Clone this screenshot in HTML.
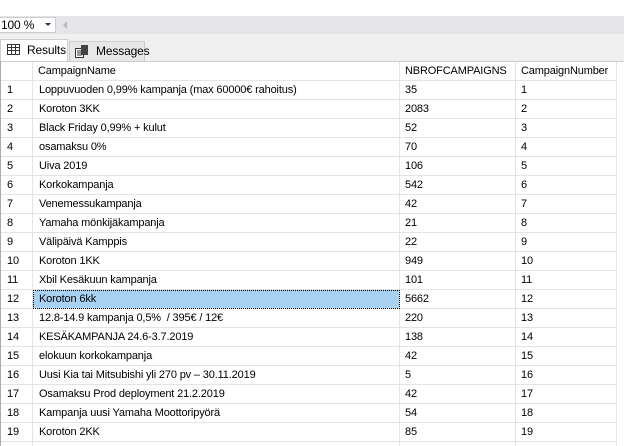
<!DOCTYPE html>
<html><head><meta charset="utf-8"><style>
*{margin:0;padding:0;box-sizing:border-box}
html,body{width:624px;height:446px;overflow:hidden}
body{background:#fff;font-family:"Liberation Sans",sans-serif;font-size:11px;letter-spacing:-0.15px;color:#000;position:relative}
.bar{position:absolute;left:0;top:16px;width:624px;height:18px;background:#e6e6ea}
.dd{position:absolute;left:0;top:17px;width:56px;height:16px;background:#fff;border:1px solid #ccc;border-left:none;font-size:12px;line-height:14px;padding-left:1px}
.dd span{position:absolute;right:4px;top:5px;width:0;height:0;border-left:3px solid transparent;border-right:3px solid transparent;border-top:3px solid #333}
.tabs{position:absolute;left:0;top:34px;width:624px;height:27px;background:#f0f0f0}
.tab{position:absolute;height:22px;line-height:20px;font-size:12px}
.grid{position:absolute;left:0;top:61px;width:624px;height:385px;border-top:1px solid #ccc;border-left:1px solid #aaa;overflow:hidden}
.row{position:absolute;left:0;height:19px;width:616px}
.c{position:absolute;top:0;height:19px;line-height:18px;border-right:1px solid #e4e4e4;border-bottom:1px solid #e4e4e4;white-space:nowrap;overflow:hidden}
.c0{left:0;width:32px;padding-left:6px}
.c1{left:32px;width:367px;padding-left:6px}
.c2{left:399px;width:116px;padding-left:5px}
.c3{left:515px;width:101px;padding-left:5px}
.hdr .c{padding-left:5px}
.sel{background:#a9d1f2;outline:1px dotted #000;outline-offset:-1px}
</style></head><body>
<div class="bar"></div>
<div class="dd">100 %<span></span></div>
<div style="position:absolute;left:63px;top:21px;width:0;height:0;border-top:4px solid transparent;border-bottom:4px solid transparent;border-right:4px solid #bbb"></div>
<div class="tabs">
<div class="tab" style="left:0;top:5px;width:68px;background:#fff;border:1px solid #ccc;border-bottom:none;padding-left:26px">Results
<svg style="position:absolute;left:6px;top:4px" width="13" height="11"><rect x="0.5" y="0.5" width="12" height="10" fill="#fff" stroke="#333"/><path d="M0 3.5H13M0 6.5H13M4.5 0V11M8.5 0V11" stroke="#333"/></svg></div>
<div class="tab" style="left:69px;top:7px;width:76px;height:20px;background:#e8e8e8;border:1px solid #ccc;border-bottom:none;padding-left:26px;line-height:18px">Messages
<svg style="position:absolute;left:5px;top:3px" width="14" height="13"><rect x="0.5" y="3.5" width="8" height="9" fill="#fff" stroke="#333"/><path d="M2 6H7M2 8H7M2 10H7" stroke="#333"/><rect x="6" y="0" width="7" height="10" fill="#444"/></svg></div>
</div>
<div class="grid">
<div class="row hdr" style="top:0"><div class="c c0"></div><div class="c c1">CampaignName</div><div class="c c2">NBROFCAMPAIGNS</div><div class="c c3">CampaignNumber</div></div>
<div class="row" style="top:19px"><div class="c c0">1</div><div class="c c1">Loppuvuoden 0,99% kampanja (max 60000€ rahoitus)</div><div class="c c2">35</div><div class="c c3">1</div></div>
<div class="row" style="top:38px"><div class="c c0">2</div><div class="c c1">Koroton 3KK</div><div class="c c2">2083</div><div class="c c3">2</div></div>
<div class="row" style="top:57px"><div class="c c0">3</div><div class="c c1">Black Friday 0,99% + kulut</div><div class="c c2">52</div><div class="c c3">3</div></div>
<div class="row" style="top:76px"><div class="c c0">4</div><div class="c c1">osamaksu 0%</div><div class="c c2">70</div><div class="c c3">4</div></div>
<div class="row" style="top:95px"><div class="c c0">5</div><div class="c c1">Uiva 2019</div><div class="c c2">106</div><div class="c c3">5</div></div>
<div class="row" style="top:114px"><div class="c c0">6</div><div class="c c1">Korkokampanja</div><div class="c c2">542</div><div class="c c3">6</div></div>
<div class="row" style="top:133px"><div class="c c0">7</div><div class="c c1">Venemessukampanja</div><div class="c c2">42</div><div class="c c3">7</div></div>
<div class="row" style="top:152px"><div class="c c0">8</div><div class="c c1">Yamaha mönkijäkampanja</div><div class="c c2">21</div><div class="c c3">8</div></div>
<div class="row" style="top:171px"><div class="c c0">9</div><div class="c c1">Välipäivä Kamppis</div><div class="c c2">22</div><div class="c c3">9</div></div>
<div class="row" style="top:190px"><div class="c c0">10</div><div class="c c1">Koroton 1KK</div><div class="c c2">949</div><div class="c c3">10</div></div>
<div class="row" style="top:209px"><div class="c c0">11</div><div class="c c1">Xbil Kesäkuun kampanja</div><div class="c c2">101</div><div class="c c3">11</div></div>
<div class="row" style="top:228px"><div class="c c0">12</div><div class="c c1 sel">Koroton 6kk</div><div class="c c2">5662</div><div class="c c3">12</div></div>
<div class="row" style="top:247px"><div class="c c0">13</div><div class="c c1">12.8-14.9 kampanja 0,5%&nbsp; / 395€ / 12€</div><div class="c c2">220</div><div class="c c3">13</div></div>
<div class="row" style="top:266px"><div class="c c0">14</div><div class="c c1">KESÄKAMPANJA 24.6-3.7.2019</div><div class="c c2">138</div><div class="c c3">14</div></div>
<div class="row" style="top:285px"><div class="c c0">15</div><div class="c c1">elokuun korkokampanja</div><div class="c c2">42</div><div class="c c3">15</div></div>
<div class="row" style="top:304px"><div class="c c0">16</div><div class="c c1">Uusi Kia tai Mitsubishi yli 270 pv – 30.11.2019</div><div class="c c2">5</div><div class="c c3">16</div></div>
<div class="row" style="top:323px"><div class="c c0">17</div><div class="c c1">Osamaksu Prod deployment 21.2.2019</div><div class="c c2">42</div><div class="c c3">17</div></div>
<div class="row" style="top:342px"><div class="c c0">18</div><div class="c c1">Kampanja uusi Yamaha Moottoripyörä</div><div class="c c2">54</div><div class="c c3">18</div></div>
<div class="row" style="top:361px"><div class="c c0">19</div><div class="c c1">Koroton 2KK</div><div class="c c2">85</div><div class="c c3">19</div></div>
<div class="row" style="top:380px"><div class="c c0"></div><div class="c c1"></div><div class="c c2"></div><div class="c c3"></div></div>
</div>
</body></html>
